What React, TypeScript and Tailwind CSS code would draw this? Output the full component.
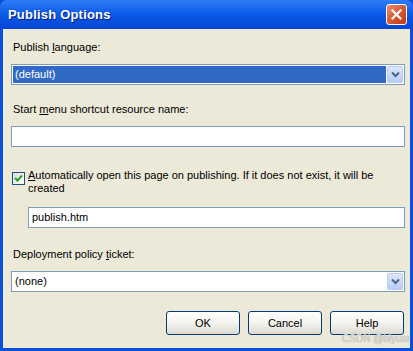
import React from 'react';

const font = { fontFamily: '"Liberation Sans", Arial, sans-serif' };

const Chevron = () => (
  <svg width="9" height="7" viewBox="0 0 9 7">
    <path d="M1 1.5 L4.5 5 L8 1.5" fill="none" stroke="#4d6185" strokeWidth="2" />
  </svg>
);

const DropButton = () => (
  <div className="w-[16px] h-[17px] rounded-[2px] border border-[#b9cdf6] bg-gradient-to-b from-[#dce6fd] to-[#b7cbf8] flex items-center justify-center">
    <Chevron />
  </div>
);

const Combo = ({ value, selected }: { value: string; selected?: boolean }) => (
  <div className="h-[21px] border border-[#7f9db9] bg-white flex items-center p-[1px] gap-[1px]">
    <div className={`flex-1 h-full flex items-center pl-[2px] text-[11px] ${selected ? 'bg-[#316ac5] text-white' : 'text-black'}`}>
      {value}
    </div>
    <DropButton />
  </div>
);

const TextBox = ({ value, className = '' }: { value?: string; className?: string }) => (
  <div className={`h-[21px] border border-[#7f9db9] bg-white flex items-center pl-[3px] text-[11px] text-black ${className}`}>
    {value}
  </div>
);

const XpButton = ({ label }: { label: string }) => (
  <button className="w-[74px] h-[24px] rounded-[3px] border border-[#003c74] bg-gradient-to-b from-white via-[#f4f3ee] to-[#dcdad0] text-[11px] text-black flex items-center justify-center">
    {label}
  </button>
);

export default function App() {
  return (
    <div className="w-[413px] h-[351px] flex flex-col bg-[#0a4fd8] overflow-hidden" style={font}>
      {/* title bar */}
      <div className="h-[29px] shrink-0 flex items-center justify-between pl-[8px] pr-[6px] bg-gradient-to-b from-[#2f7cf7] via-[#0a58e6] to-[#0546d4] rounded-t-[7px]">
        <span className="text-white font-bold text-[13px] tracking-[0.2px] [text-shadow:1px_1px_0_#0a1e78]">Publish Options</span>
        <div className="w-[21px] h-[21px] rounded-[3px] border border-white bg-gradient-to-br from-[#ea8d6e] via-[#d65a33] to-[#c1380f] flex items-center justify-center">
          <svg width="11" height="11" viewBox="0 0 11 11">
            <path d="M1.5 1.5 L9.5 9.5 M9.5 1.5 L1.5 9.5" stroke="white" strokeWidth="2.2" strokeLinecap="square" />
          </svg>
        </div>
      </div>

      {/* client */}
      <div className="flex-1 mx-[3px] mb-[3px] bg-[#ece9d8] flex flex-col pl-[8px] pr-[5px] relative">
        <div className="mt-[11px] pl-[2px] h-[14px] leading-[14px] text-[11px] text-black">
          Publish <span className="underline">l</span>anguage:
        </div>
        <div className="mt-[10px]">
          <Combo value="(default)" selected />
        </div>

        <div className="mt-[17px] pl-[2px] h-[14px] leading-[14px] text-[11px] text-black">
          Start <span className="underline">m</span>enu shortcut resource name:
        </div>
        <div className="mt-[10px]">
          <TextBox />
        </div>

        <div className="mt-[22px] flex items-start gap-[3px]">
          <div className="mt-[3px] ml-[1px] w-[13px] h-[13px] shrink-0 border border-[#1c5180] bg-gradient-to-br from-[#dcdcd7] to-white flex items-center justify-center">
            <svg width="9" height="9" viewBox="0 0 9 9">
              <path d="M1 4 L3.5 6.5 L8 1.5" fill="none" stroke="#21a121" strokeWidth="2" />
            </svg>
          </div>
          <div className="text-[11px] leading-[13px] text-black pr-[30px]">
            <span className="underline">A</span>utomatically open this page on publishing. If it does not exist, it will be created
          </div>
        </div>
        <div className="mt-[12px] pl-[17px]">
          <TextBox value="publish.htm" />
        </div>

        <div className="mt-[19px] pl-[2px] h-[14px] leading-[14px] text-[11px] text-black">
          Deployment policy <span className="underline">t</span>icket:
        </div>
        <div className="mt-[10px]">
          <Combo value="(none)" />
        </div>

        <div className="mt-[19px] flex justify-end gap-[8px] pr-[1px]">
          <XpButton label="OK" />
          <XpButton label="Cancel" />
          <XpButton label="Help" />
        </div>

        <span className="absolute right-[0px] bottom-[2px] text-[10px] text-[#d8d8d8] [text-shadow:0_0_1px_#9a9a9a]">CSDN @biyusr</span>
      </div>
    </div>
  );
}
